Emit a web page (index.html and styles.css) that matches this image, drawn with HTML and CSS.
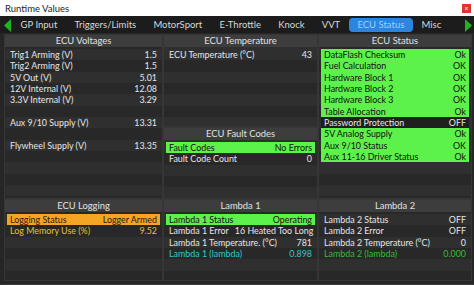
FILE: index.html
```html
<!DOCTYPE html>
<html lang="en">
<head>
    <meta charset="UTF-8">
    <title>Runtime Values</title>
    <link rel="stylesheet" href="styles.css">
</head>
<body>
    <div class="window">
        <div class="titlebar">
            <span class="title">Runtime Values</span>
            <span class="close">x</span>
        </div>
        <div class="tabbar">
            <svg class="arrow" width="7" height="13" viewBox="0 0 7 13"><polygon points="7,0 0,6.5 7,13" fill="#1fb41f"/></svg>
            <div class="tabs">
                <span class="tab">GP Input</span>
                <span class="tab">Triggers/Limits</span>
                <span class="tab">MotorSport</span>
                <span class="tab">E-Throttle</span>
                <span class="tab">Knock</span>
                <span class="tab">VVT</span>
                <span class="tab active">ECU Status</span>
                <span class="tab">Misc</span>
            </div>
            <svg class="arrow" width="7" height="13" viewBox="0 0 7 13"><polygon points="0,0 7,6.5 0,13" fill="#1fb41f"/></svg>
        </div>
        <div class="content">
            <div class="panel">
                <div class="panel-title">ECU Voltages</div>
                <div class="rows">
                    <div class="row"><span>Trig1 Arming (V)</span><span>1.5</span></div>
                    <div class="row"><span>Trig2 Arming (V)</span><span>1.5</span></div>
                    <div class="row"><span>5V Out (V)</span><span>5.01</span></div>
                    <div class="row"><span>12V Internal (V)</span><span>12.08</span></div>
                    <div class="row"><span>3.3V Internal (V)</span><span>3.29</span></div>
                    <div class="row"></div>
                    <div class="row"><span>Aux 9/10 Supply (V)</span><span>13.31</span></div>
                    <div class="row"></div>
                    <div class="row"><span>Flywheel Supply (V)</span><span>13.35</span></div>
                </div>
            </div>
            <div class="stack">
                <div class="panel">
                    <div class="panel-title">ECU Temperature</div>
                    <div class="rows">
                        <div class="row"><span>ECU Temperature (°C)</span><span>43</span></div>
                    </div>
                </div>
                <div class="panel">
                    <div class="panel-title">ECU Fault Codes</div>
                    <div class="rows">
                        <div class="row ok"><span>Fault Codes</span><span>No Errors</span></div>
                        <div class="row"><span>Fault Code Count</span><span>0</span></div>
                    </div>
                </div>
            </div>
            <div class="panel">
                <div class="panel-title">ECU Status</div>
                <div class="rows">
                    <div class="row ok"><span>DataFlash Checksum</span><span>Ok</span></div>
                    <div class="row ok"><span>Fuel Calculation</span><span>OK</span></div>
                    <div class="row ok"><span>Hardware Block 1</span><span>OK</span></div>
                    <div class="row ok"><span>Hardware Block 2</span><span>OK</span></div>
                    <div class="row ok"><span>Hardware Block 3</span><span>OK</span></div>
                    <div class="row ok"><span>Table Allocation</span><span>Ok</span></div>
                    <div class="row dark"><span>Password Protection</span><span>OFF</span></div>
                    <div class="row ok"><span>5V Analog Supply</span><span>Ok</span></div>
                    <div class="row ok"><span>Aux 9/10 Status</span><span>OK</span></div>
                    <div class="row ok"><span>Aux 11-16 Driver Status</span><span>Ok</span></div>
                </div>
            </div>
            <div class="panel">
                <div class="panel-title">ECU Logging</div>
                <div class="rows">
                    <div class="row warn"><span>Logging Status</span><span>Logger Armed</span></div>
                    <div class="row gold"><span>Log Memory Use (%)</span><span>9.52</span></div>
                </div>
            </div>
            <div class="panel">
                <div class="panel-title">Lambda 1</div>
                <div class="rows">
                    <div class="row ok"><span>Lambda 1 Status</span><span>Operating</span></div>
                    <div class="row"><span>Lambda 1 Error</span><span>16 Heated Too Long</span></div>
                    <div class="row"><span>Lambda 1 Temperature. (°C)</span><span>781</span></div>
                    <div class="row cyan"><span>Lambda 1 (lambda)</span><span>0.898</span></div>
                </div>
            </div>
            <div class="panel">
                <div class="panel-title">Lambda 2</div>
                <div class="rows">
                    <div class="row"><span>Lambda 2 Status</span><span>OFF</span></div>
                    <div class="row"><span>Lambda 2 Error</span><span>OFF</span></div>
                    <div class="row"><span>Lambda 2 Temperature (°C)</span><span>0</span></div>
                    <div class="row green"><span>Lambda 2 (lambda)</span><span>0.000</span></div>
                </div>
            </div>
        </div>
    </div>
</body>
</html>
```

FILE: styles.css
```css
body {
    margin: 0;
    background-color: #3a3a3a;
    font-family: 'Lato', 'Open Sans', sans-serif;
}

.window {
    width: 474px;
    height: 285px;
    display: flex;
    flex-direction: column;
    background-color: #222;
}

.titlebar {
    height: 17px;
    background-color: white;
    display: flex;
    align-items: center;
    justify-content: space-between;
    padding: 0 3px 0 5px;
    color: #222;
    font-size: 9.5px;
}

.close {
    width: 9px;
    height: 9px;
    background-color: #d9372f;
    color: white;
    font-size: 6px;
    line-height: 8px;
    text-align: center;
}

.tabbar {
    height: 17px;
    display: flex;
    align-items: center;
    padding: 1px 2px 0 4px;
    background-color: #1c1c1c;
}

.arrow {
    flex-shrink: 0;
}

.tabs {
    display: flex;
    flex: 1;
    padding-left: 1px;
}

.tab {
    flex-shrink: 0;
    padding: 0 8.6px;
    height: 14px;
    line-height: 14px;
    font-size: 9.5px;
    color: #d8d8d8;
    border-radius: 4px;
    white-space: nowrap;
}

.tab.active {
    background-color: #2c86e0;
    color: #9fcfff;
}

.content {
    flex: 1;
    display: grid;
    grid-template-columns: 157px 153px 152px;
    grid-template-rows: 163px 80px;
    gap: 2px;
    padding: 2px 4px 4px 5px;
    background-color: #262626;
    border-bottom: 1px solid #3a3a3a;
}

.stack {
    display: grid;
    grid-template-rows: 91px 70px;
    gap: 2px;
}

.panel {
    display: flex;
    flex-direction: column;
    background-color: #2a2a2a;
    outline: 1px solid #363636;
    overflow: hidden;
}

.panel-title {
    height: 12px;
    line-height: 12px;
    text-align: center;
    font-size: 9.4px;
    color: #e2e2e2;
    background-color: #3d3d3d;
}

.rows {
    flex: 1;
    padding: 2px 2px 0 2px;
    background: repeating-linear-gradient(#2f2f2f 0, #2f2f2f 11.33px, #282828 11.33px, #282828 22.66px);
    background-origin: content-box;
}

.row {
    height: 11.33px;
    line-height: 11.33px;
    display: flex;
    justify-content: space-between;
    gap: 6px;
    padding: 0 3px;
    font-size: 8.9px;
    color: #e6e6e6;
    white-space: nowrap;
}

.row.ok {
    background-color: #5cf24a;
    color: #111;
}

.row.dark {
    background-color: #1f1f1f;
}

.row.warn {
    background-color: #f5a524;
    color: #2a1a00;
}

.row.gold {
    color: #e6c22a;
}

.row.cyan {
    color: #36c6c8;
}

.row.green {
    color: #2fbf2f;
}
```
